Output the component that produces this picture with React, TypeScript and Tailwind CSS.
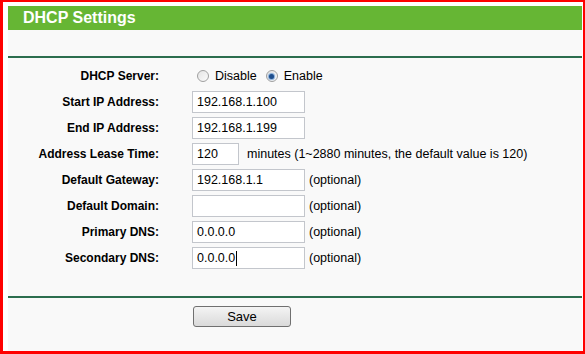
const rows: { label: string; value?: string; width?: string; note?: string; gap?: string; caret?: boolean }[] = [
  { label: "Start IP Address:", value: "192.168.1.100" },
  { label: "End IP Address:", value: "192.168.1.199" },
  { label: "Address Lease Time:", value: "120", width: "w-[47px]", gap: "ml-[8px]", note: "minutes (1~2880 minutes, the default value is 120)" },
  { label: "Default Gateway:", value: "192.168.1.1", note: "(optional)" },
  { label: "Default Domain:", value: "", note: "(optional)" },
  { label: "Primary DNS:", value: "0.0.0.0", note: "(optional)" },
  { label: "Secondary DNS:", value: "0.0.0.0", note: "(optional)", caret: true },
]

function Radio({ checked }: { checked?: boolean }) {
  return (
    <span className="flex h-[12px] w-[12px] items-center justify-center rounded-full border border-[#a0a0a0] bg-gradient-to-br from-[#e4e4e4] to-[#fbfbfb]">
      {checked && <span className="h-[5px] w-[5px] rounded-full bg-[#1e4e8c] shadow-[0_0_1px_1px_#7fa8d8]" />}
    </span>
  )
}

function TextBox({ value, width, caret }: { value?: string; width?: string; caret?: boolean }) {
  return (
    <div className={`flex h-[22px] items-center border border-[#c3c6cc] bg-white pl-[4px] ${width ?? "w-[113px]"}`}>
      <span>{value}</span>
      {caret && <span className="ml-px h-[15px] w-px bg-black" />}
    </div>
  )
}

export default function App() {
  return (
    <div className="h-[354px] w-[585px] overflow-hidden border-b-[3px] border-l-[3px] border-r-[2px] border-t-[2px] border-[#ff0000] bg-white pl-[5px] pr-px pt-[4px] font-['Liberation_Sans',Arial,sans-serif] text-[12px] text-black">
      <div className="flex h-[24px] items-center bg-[#66b634] pl-[15px] text-[16px] font-bold text-white">
        DHCP Settings
      </div>
      <div className="h-[323px] bg-[#f9f9f9]">
        <div className="h-[26px]" />
        <div className="h-[2px] bg-[#2c6e4e]" />
        <div className="grid grid-cols-[151px_1fr] gap-x-[33px] pt-[5px]">
          <div className="flex h-[26px] items-center justify-end font-bold">DHCP Server:</div>
          <div className="flex h-[26px] items-center text-[12.5px]">
            <span className="ml-[5px]"><Radio /></span>
            <span className="ml-[6px]">Disable</span>
            <span className="ml-[9px]"><Radio checked /></span>
            <span className="ml-[6px]">Enable</span>
          </div>
          {rows.map((r) => (
            <div key={r.label} className="contents">
              <div className="flex h-[26px] items-center justify-end font-bold">{r.label}</div>
              <div className="flex h-[26px] items-center text-[12.5px]">
                <TextBox value={r.value} width={r.width} caret={r.caret} />
                {r.note && <span className={r.gap ?? "ml-[4px]"}>{r.note}</span>}
              </div>
            </div>
          ))}
        </div>
        <div className="h-[25px]" />
        <div className="h-[2px] bg-[#2c6e4e]" />
        <div className="pl-[185px] pt-[8px]">
          <button className="h-[21px] w-[98px] rounded-[3px] border border-[#707070] bg-gradient-to-b from-[#f4f4f4] to-[#dadada] text-[13px]">
            Save
          </button>
        </div>
      </div>
    </div>
  )
}
